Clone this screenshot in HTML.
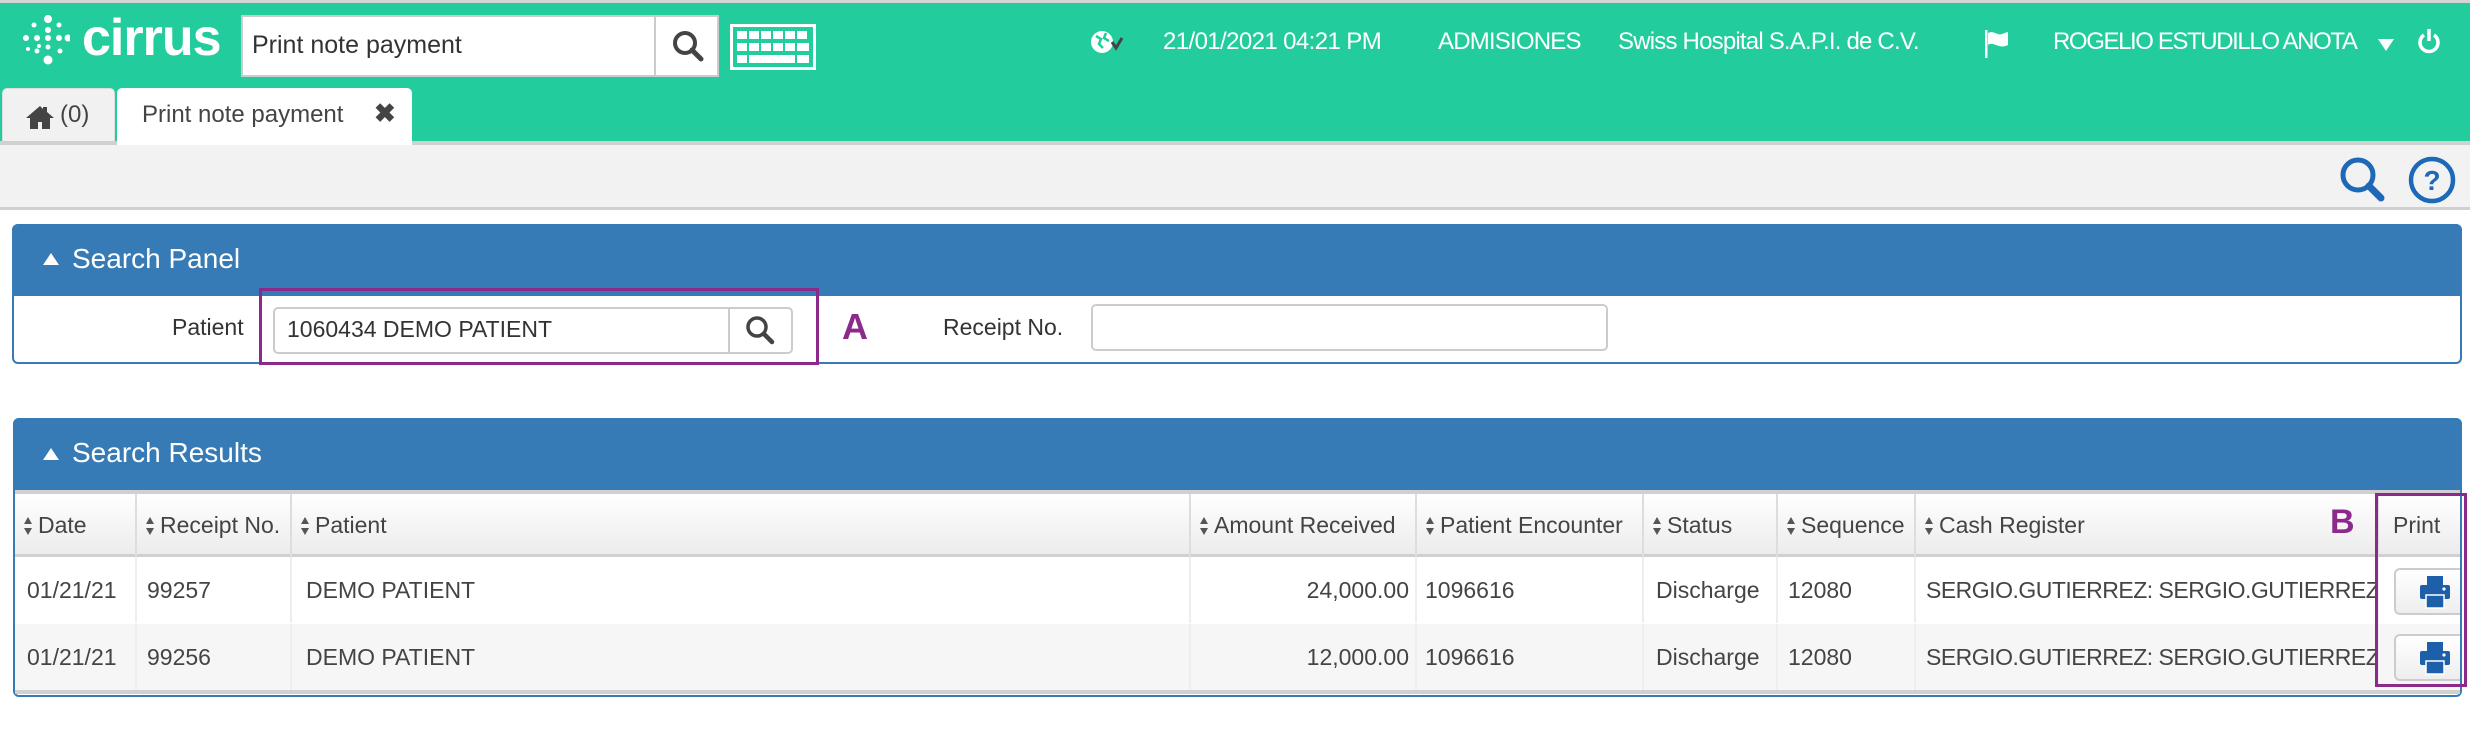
<!DOCTYPE html>
<html><head><meta charset="utf-8"><style>
*{box-sizing:border-box;margin:0;padding:0}
body{width:2476px;height:740px;background:#fff;font-family:"Liberation Sans",sans-serif;position:relative;overflow:hidden;color:#333}
.a{position:absolute}
.top{left:0;top:0;width:2470px;height:141px;background:#23cc9c;border-top:3px solid #d4d4d4}
.wt{color:#fff;font-size:24px;top:28px;white-space:nowrap}
.sortic{display:inline-block;width:10px;height:20px;vertical-align:-3px;margin-right:5px}
.th{position:absolute;top:0;height:63px;line-height:63px;font-size:23px;color:#444;border-right:2px solid #ddd;padding-left:8px;white-space:nowrap;overflow:hidden}
.td{position:absolute;height:66px;line-height:66px;font-size:23px;color:#444;border-right:2px solid #eee;padding-left:10px;white-space:nowrap;overflow:hidden}
</style></head><body>
<div class="a top"></div>
<!-- logo -->
<svg class="a" style="left:10px;top:14px" width="60" height="52" viewBox="0 0 60 52" fill="#fff">
<circle cx="38" cy="5" r="4"/><circle cx="24" cy="11" r="2.5"/><circle cx="49" cy="11" r="2.5"/><circle cx="38" cy="16" r="3"/>
<circle cx="16" cy="24" r="3"/><circle cx="27" cy="24" r="3"/><circle cx="38" cy="24" r="3"/><circle cx="49" cy="24" r="3"/><circle cx="58" cy="24" r="3.5"/><circle cx="18" cy="35" r="2"/>
<circle cx="38" cy="33" r="2.5"/><circle cx="27" cy="37" r="2.5"/><circle cx="50" cy="37" r="2.5"/><circle cx="38" cy="46" r="4.5"/><circle cx="29" cy="32" r="2"/>
</svg>
<div class="a" style="left:82px;top:8px;color:#fff;font-size:52px;font-weight:bold;letter-spacing:-1px">cirrus</div>
<!-- search box -->
<div class="a" style="left:241px;top:15px;width:478px;height:62px;background:#fff;border:2px solid #ccc"></div>
<div class="a" style="left:252px;top:31px;font-size:25px;color:#333">Print note payment</div>
<div class="a" style="left:654px;top:15px;width:2px;height:62px;background:#ccc"></div>
<svg class="a" style="left:670px;top:28px" width="36" height="36" viewBox="0 0 36 36"><circle cx="15" cy="15" r="10" fill="none" stroke="#444" stroke-width="4"/><path d="M22 22l9 9" stroke="#444" stroke-width="5" stroke-linecap="round"/></svg>
<!-- keyboard -->
<svg class="a" style="left:730px;top:24px" width="86" height="46" viewBox="0 0 86 46"><rect x="1.5" y="1.5" width="83" height="43" fill="none" stroke="#fff" stroke-width="3"/>
<g fill="#fff"><rect x="7" y="7" width="70" height="8"/><rect x="7" y="19" width="72" height="8"/><rect x="7" y="31" width="72" height="8"/></g>
<g fill="#23cc9c"><rect x="17" y="7" width="2" height="20"/><rect x="29" y="7" width="2" height="20"/><rect x="41" y="7" width="2" height="20"/><rect x="53" y="7" width="2" height="20"/><rect x="65" y="7" width="2" height="20"/><rect x="17" y="31" width="2" height="8"/><rect x="65" y="31" width="2" height="8"/></g></svg>
<!-- right header -->
<svg class="a" style="left:1090px;top:28px" width="34" height="30" viewBox="0 0 34 30"><circle cx="12" cy="14" r="11" fill="#fff"/><path d="M6 8l5 3-2 5 4 4M16 5l-2 5 5 3" stroke="#23cc9c" stroke-width="2.5" fill="none"/><path d="M22 14l4 6 6-10" stroke="#444" stroke-width="3" fill="none"/></svg>
<div class="a wt" style="left:1163px;letter-spacing:-0.6px">21/01/2021 04:21 PM</div>
<div class="a wt" style="left:1438px;letter-spacing:-0.8px">ADMISIONES</div>
<div class="a wt" style="left:1618px;letter-spacing:-0.8px">Swiss Hospital S.A.P.I. de C.V.</div>
<svg class="a" style="left:1983px;top:28px" width="32" height="32" viewBox="0 0 32 32"><rect x="2" y="2" width="2.5" height="28" fill="#fff"/><path d="M5 5c6-3 9 3 14 1s6-2 6-2v13c-4 2-7 2-12 0s-7-1-8 0z" fill="#fff"/></svg>
<div class="a wt" style="left:2053px;letter-spacing:-1.4px">ROGELIO ESTUDILLO ANOTA</div>
<svg class="a" style="left:2377px;top:38px" width="18" height="14"><path d="M1 1h16l-8 12z" fill="#fff"/></svg>
<svg class="a" style="left:2418px;top:26px" width="22" height="30" viewBox="0 0 22 30"><path d="M6 9a9 9 0 1 0 10 0" stroke="#fff" stroke-width="3.5" fill="none"/><path d="M11 3v12" stroke="#fff" stroke-width="3.5"/></svg>
<!-- tabs -->
<div class="a" style="left:2px;top:88px;width:113px;height:53px;background:#f1f1f1;border:1px solid #ddd;border-bottom:none;border-radius:5px 5px 0 0"></div>
<svg class="a" style="left:25px;top:104px" width="30" height="26" viewBox="0 0 30 26"><path d="M15 2L1 14h4v11h8v-7h4v7h8V14h4L22 8V3h-4v2z" fill="#444"/></svg>
<div class="a" style="left:60px;top:101px;font-size:24px;color:#444">(0)</div>
<div class="a" style="left:117px;top:88px;width:295px;height:56px;background:#fff;border-radius:5px 5px 0 0"></div>
<div class="a" style="left:142px;top:101px;font-size:24px;color:#444">Print note payment</div>
<div class="a" style="left:374px;top:98px;font-size:26px;color:#444;font-weight:bold">✖</div>
<!-- toolbar -->
<div class="a" style="left:0;top:141px;width:2470px;height:69px;background:#f2f2f2;border-top:4px solid #d0d0d0;border-bottom:3px solid #d0d0d0"></div>
<div class="a" style="left:117px;top:141px;width:295px;height:4px;background:#fff"></div>
<svg class="a" style="left:2338px;top:155px" width="50" height="50" viewBox="0 0 50 50"><circle cx="20" cy="20" r="15" fill="none" stroke="#1d69b8" stroke-width="5"/><path d="M31 31l12 12" stroke="#1d69b8" stroke-width="7" stroke-linecap="round"/></svg>
<svg class="a" style="left:2407px;top:155px" width="50" height="50" viewBox="0 0 50 50"><circle cx="25" cy="25" r="21" fill="none" stroke="#1d69b8" stroke-width="4.5"/><text x="25" y="35" text-anchor="middle" font-family="Liberation Sans" font-weight="bold" font-size="28" fill="#1d69b8">?</text></svg>
<!-- search panel -->
<div class="a" style="left:12px;top:224px;width:2450px;height:140px;border:2px solid #367bb5;border-radius:6px;background:#fff"></div>
<div class="a" style="left:12px;top:224px;width:2450px;height:72px;background:#367bb5;border-radius:6px 6px 0 0"></div>
<svg class="a" style="left:43px;top:252px" width="16" height="14"><path d="M0 13L8 1l8 12z" fill="#fff"/></svg>
<div class="a" style="left:72px;top:243px;font-size:28px;color:#fff">Search Panel</div>
<div class="a" style="left:172px;top:314px;font-size:23px;color:#333">Patient</div>
<div class="a" style="left:273px;top:307px;width:520px;height:47px;border:2px solid #ccc;border-radius:5px;background:#fff"></div>
<div class="a" style="left:728px;top:309px;width:2px;height:43px;background:#ccc"></div>
<div class="a" style="left:287px;top:316px;font-size:23px;color:#333">1060434 DEMO PATIENT</div>
<svg class="a" style="left:743px;top:313px" width="34" height="34" viewBox="0 0 34 34"><circle cx="14" cy="14" r="9" fill="none" stroke="#444" stroke-width="3.5"/><path d="M21 21l8 8" stroke="#444" stroke-width="4.5" stroke-linecap="round"/></svg>
<div class="a" style="left:259px;top:288px;width:560px;height:77px;border:3px solid #8b2a8b"></div>
<div class="a" style="left:842px;top:306px;font-size:36px;font-weight:bold;color:#8b2a8b">A</div>
<div class="a" style="left:943px;top:314px;font-size:23px;color:#333">Receipt No.</div>
<div class="a" style="left:1091px;top:304px;width:517px;height:47px;border:2px solid #ccc;border-radius:5px;background:#fff"></div>
<!-- search results -->
<div class="a" style="left:13px;top:418px;width:2449px;height:279px;border:2px solid #367bb5;border-radius:6px;background:#fff"></div>
<div class="a" style="left:13px;top:418px;width:2449px;height:72px;background:#367bb5;border-radius:6px 6px 0 0"></div>
<svg class="a" style="left:43px;top:447px" width="16" height="14"><path d="M0 13L8 1l8 12z" fill="#fff"/></svg>
<div class="a" style="left:72px;top:437px;font-size:28px;color:#fff">Search Results</div>
<div class="a" style="left:15px;top:490px;width:2445px;height:67px;background:linear-gradient(#fff,#ececec);border-top:4px solid #d0d0d0;border-bottom:3px solid #d0d0d0"></div>
<div class="a" style="left:15px;top:624px;width:2445px;height:66px;background:#f6f6f6"></div>
<div class="a" style="left:15px;top:690px;width:2445px;height:4px;background:#d0d0d0"></div>
<div class="a" style="left:15px;top:494px;width:2445px;height:196px">
<div class="th" style="left:0;width:122px"><svg class="sortic" viewBox="0 0 10 20"><path d="M5 1l4 7H1zM5 19l4-7H1z" fill="#555"/></svg>Date</div>
<div class="th" style="left:122px;width:155px"><svg class="sortic" viewBox="0 0 10 20"><path d="M5 1l4 7H1zM5 19l4-7H1z" fill="#555"/></svg>Receipt No.</div>
<div class="th" style="left:277px;width:899px"><svg class="sortic" viewBox="0 0 10 20"><path d="M5 1l4 7H1zM5 19l4-7H1z" fill="#555"/></svg>Patient</div>
<div class="th" style="left:1176px;width:226px"><svg class="sortic" viewBox="0 0 10 20"><path d="M5 1l4 7H1zM5 19l4-7H1z" fill="#555"/></svg>Amount Received</div>
<div class="th" style="left:1402px;width:227px"><svg class="sortic" viewBox="0 0 10 20"><path d="M5 1l4 7H1zM5 19l4-7H1z" fill="#555"/></svg>Patient Encounter</div>
<div class="th" style="left:1629px;width:134px"><svg class="sortic" viewBox="0 0 10 20"><path d="M5 1l4 7H1zM5 19l4-7H1z" fill="#555"/></svg>Status</div>
<div class="th" style="left:1763px;width:138px"><svg class="sortic" viewBox="0 0 10 20"><path d="M5 1l4 7H1zM5 19l4-7H1z" fill="#555"/></svg>Sequence</div>
<div class="th" style="left:1901px;width:463px"><svg class="sortic" viewBox="0 0 10 20"><path d="M5 1l4 7H1zM5 19l4-7H1z" fill="#555"/></svg>Cash Register</div>
<div class="th" style="left:2364px;width:81px;border:none;padding-left:14px">Print</div>
</div>
<div class="a" style="left:15px;top:557px;width:2445px;height:133px">
<div class="td" style="top:0;left:0;width:122px;padding-left:12px">01/21/21</div>
<div class="td" style="top:0;left:122px;width:155px">99257</div>
<div class="td" style="top:0;left:277px;width:899px;padding-left:14px">DEMO PATIENT</div>
<div class="td" style="top:0;left:1176px;width:226px;text-align:right;padding-right:6px">24,000.00</div>
<div class="td" style="top:0;left:1402px;width:227px;padding-left:8px">1096616</div>
<div class="td" style="top:0;left:1629px;width:134px;padding-left:12px">Discharge</div>
<div class="td" style="top:0;left:1763px;width:138px">12080</div>
<div class="td" style="top:0;left:1901px;width:463px;letter-spacing:-0.5px">SERGIO.GUTIERREZ: SERGIO.GUTIERREZ</div>
<div class="td" style="top:67px;left:0;width:122px;padding-left:12px">01/21/21</div>
<div class="td" style="top:67px;left:122px;width:155px">99256</div>
<div class="td" style="top:67px;left:277px;width:899px;padding-left:14px">DEMO PATIENT</div>
<div class="td" style="top:67px;left:1176px;width:226px;text-align:right;padding-right:6px">12,000.00</div>
<div class="td" style="top:67px;left:1402px;width:227px;padding-left:8px">1096616</div>
<div class="td" style="top:67px;left:1629px;width:134px;padding-left:12px">Discharge</div>
<div class="td" style="top:67px;left:1763px;width:138px">12080</div>
<div class="td" style="top:67px;left:1901px;width:463px;letter-spacing:-0.5px">SERGIO.GUTIERREZ: SERGIO.GUTIERREZ</div>
</div>
<!-- print buttons -->
<div class="a" style="left:2394px;top:568px;width:66px;height:47px;border:2px solid #ccc;border-right:none;border-radius:6px 0 0 6px;background:linear-gradient(#fff,#eee)"></div>
<div class="a" style="left:2394px;top:634px;width:66px;height:47px;border:2px solid #ccc;border-right:none;border-radius:6px 0 0 6px;background:linear-gradient(#fff,#eee)"></div>
<svg class="a" style="left:2419px;top:575px" width="32" height="34" viewBox="0 0 32 34"><rect x="8" y="1" width="16" height="9" fill="#1d5fa8"/><rect x="1" y="10" width="30" height="14" rx="2" fill="#1d5fa8"/><circle cx="25" cy="14" r="1.6" fill="#fff"/><rect x="7" y="20" width="18" height="13" fill="#1d5fa8" stroke="#fff" stroke-width="1.5"/></svg>
<svg class="a" style="left:2419px;top:641px" width="32" height="34" viewBox="0 0 32 34"><rect x="8" y="1" width="16" height="9" fill="#1d5fa8"/><rect x="1" y="10" width="30" height="14" rx="2" fill="#1d5fa8"/><circle cx="25" cy="14" r="1.6" fill="#fff"/><rect x="7" y="20" width="18" height="13" fill="#1d5fa8" stroke="#fff" stroke-width="1.5"/></svg>
<div class="a" style="left:2375px;top:493px;width:92px;height:194px;border:3px solid #8b2a8b"></div>
<div class="a" style="left:2330px;top:503px;font-size:34px;font-weight:bold;color:#8b2a8b">B</div>
</body></html>
